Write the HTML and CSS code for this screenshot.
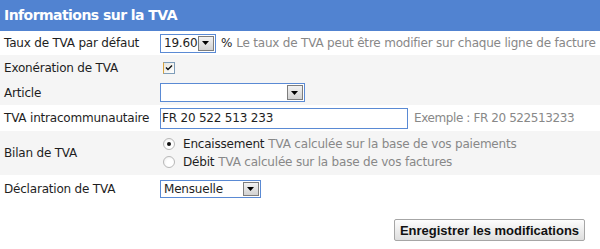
FILE: index.html
```html
<!DOCTYPE html>
<html lang="fr">
<head>
<meta charset="utf-8">
<title>Informations sur la TVA</title>
<link rel="stylesheet" href="styles.css">
</head>
<body>
<div class="panel">
  <div class="panel-title">Informations sur la TVA</div>
  <div class="row row-white r1">
    <div class="label">Taux de TVA par défaut</div>
    <div class="field">
      <div class="select sel-rate"><span class="sel-text">19.60</span><span class="sel-btn"><svg width="8" height="4" viewBox="0 0 8 4"><path d="M0 0H7L3.5 4Z" fill="#000"/></svg></span></div>
      <span class="unit">%</span>
      <span class="hint">Le taux de TVA peut être modifier sur chaque ligne de facture</span>
    </div>
  </div>
  <div class="row row-grey r2">
    <div class="label">Exonération de TVA</div>
    <div class="field">
      <span class="checkbox"><svg width="10" height="10" viewBox="0 0 10 10"><path d="M2 4.5L4 6.5L8 2.5" fill="none" stroke="#111" stroke-width="1.4"/></svg></span>
    </div>
  </div>
  <div class="row row-grey r3">
    <div class="label">Article</div>
    <div class="field">
      <div class="select sel-article"><span class="sel-text"></span><span class="sel-btn"><svg width="8" height="4" viewBox="0 0 8 4"><path d="M0 0H7L3.5 4Z" fill="#000"/></svg></span></div>
    </div>
  </div>
  <div class="row row-white r4">
    <div class="label">TVA intracommunautaire</div>
    <div class="field">
      <div class="input">FR 20 522 513 233</div>
      <span class="hint example">Exemple : FR 20 522513233</span>
    </div>
  </div>
  <div class="row row-grey r5">
    <div class="label">Bilan de TVA</div>
    <div class="field radios">
      <div class="radio-line"><span class="radio checked"></span><span class="opt">Encaissement</span> <span class="hint">TVA calculée sur la base de vos paiements</span></div>
      <div class="radio-line"><span class="radio"></span><span class="opt">Débit</span> <span class="hint">TVA calculée sur la base de vos factures</span></div>
    </div>
  </div>
  <div class="row row-white r6">
    <div class="label">Déclaration de TVA</div>
    <div class="field">
      <div class="select sel-period"><span class="sel-text">Mensuelle</span><span class="sel-btn"><svg width="8" height="4" viewBox="0 0 8 4"><path d="M0 0H7L3.5 4Z" fill="#000"/></svg></span></div>
    </div>
  </div>
  <div class="actions">
    <button class="save" type="button">Enregistrer les modifications</button>
  </div>
</div>
</body>
</html>
```
FILE: styles.css
```css
html, body {
  margin: 0;
  padding: 0;
  background: #fff;
}
body {
  font-family: "DejaVu Sans", Verdana, sans-serif;
  font-size: 12px;
  letter-spacing: -0.2px;
  color: #1e1e1e;
}
.panel {
  width: 600px;
}
.panel-title {
  height: 31px;
  line-height: 31px;
  background: #5183d1;
  color: #fff;
  font-weight: bold;
  font-size: 14px;
  letter-spacing: -0.55px;
  padding-left: 4px;
}
.row {
  display: grid;
  grid-template-columns: 160px 1fr;
  align-items: center;
}
.row-white { background: #fff; }
.row-grey { background: #f5f5f5; }
.r1 { height: 24px; }
.r2 { height: 25px; }
.r3 { height: 25px; }
.r4 { height: 26px; }
.r5 { height: 44px; }
.r6 { height: 27px; }
.label {
  padding-left: 4px;
  white-space: nowrap;
}
.field {
  display: flex;
  align-items: center;
  white-space: nowrap;
}
.hint { color: #888; }
.unit { margin-left: 5px; margin-right: 4px; }
.example { margin-left: 6px; letter-spacing: -0.4px; }

.select {
  box-sizing: border-box;
  display: flex;
  align-items: stretch;
  border: 1px solid #5a8ad4;
  background: #fff;
  padding: 1px;
}
.sel-text {
  flex: 1;
  padding-left: 2px;
  line-height: 15px;
}
.sel-btn {
  box-sizing: border-box;
  width: 16px;
  border: 1px solid #7d7d7d;
  background: linear-gradient(#f2f2f2, #d2d2d2);
  display: flex;
  align-items: center;
  justify-content: center;
}
.sel-rate { width: 56px; height: 19px; }
.sel-article { width: 145px; height: 19px; }
.sel-period { width: 101px; height: 18px; }

.checkbox {
  box-sizing: border-box;
  width: 12px;
  height: 12px;
  margin-left: 3px;
  border: 1px solid #7f9db9;
  border-left-color: #d9a23a;
  background: linear-gradient(135deg, #e6e6e0, #fff);
  display: flex;
  align-items: center;
  justify-content: center;
}

.input {
  box-sizing: border-box;
  width: 248px;
  height: 21px;
  border: 1px solid #5a8ad4;
  background: #fff;
  padding-left: 1px;
  line-height: 19px;
}

.radios {
  flex-direction: column;
  align-items: flex-start;
  gap: 5px;
}
.radio-line {
  display: flex;
  align-items: center;
  height: 13px;
}
.radio {
  box-sizing: border-box;
  width: 12px;
  height: 12px;
  margin-left: 3px;
  margin-right: 8px;
  border-radius: 50%;
  border: 1px solid #b8b8b8;
  background: radial-gradient(circle at 60% 60%, #fff 40%, #e8e8e8 100%);
  position: relative;
}
.radio.checked::after {
  content: "";
  position: absolute;
  left: 3px;
  top: 3px;
  width: 4px;
  height: 4px;
  border-radius: 50%;
  background: #111;
}
.opt { margin-right: 4px; }

.actions {
  display: flex;
  justify-content: flex-end;
  padding-top: 17px;
  padding-right: 15px;
}
.save {
  box-sizing: border-box;
  width: 191px;
  height: 22px;
  padding: 0;
  font-family: "Liberation Sans", Arial, sans-serif;
  font-weight: bold;
  font-size: 13px;
  letter-spacing: 0;
  color: #111;
  border: 1px solid #a6a6a6;
  border-radius: 2px;
  background: linear-gradient(#fdfdfd, #dedede);
}
```
